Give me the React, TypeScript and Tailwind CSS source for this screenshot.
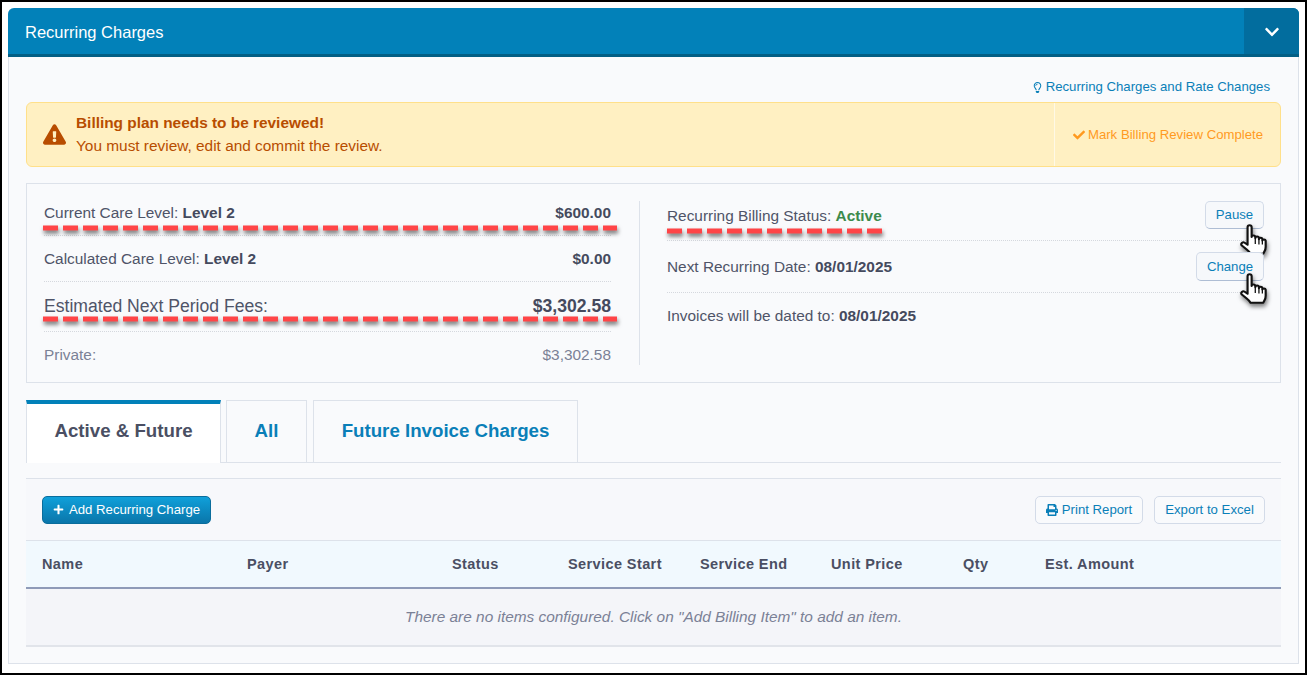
import { FaCheck, FaChevronDown, FaExclamationTriangle, FaPlus, FaPrint, FaRegLightbulb } from "react-icons/fa";

const columns = [
  { name: "Name", width: "w-[205px]" },
  { name: "Payer", width: "w-[205px]" },
  { name: "Status", width: "w-[116px]" },
  { name: "Service Start", width: "w-[132px]" },
  { name: "Service End", width: "w-[131px]" },
  { name: "Unit Price", width: "w-[132px]" },
  { name: "Qty", width: "w-[82px]" },
  { name: "Est. Amount", width: "w-[120px]" },
];

// red dashed marker drawn over a row
function Dashes({ width, className }: { width: number; className: string }) {
  return (
    <svg
      width={width}
      height="14"
      className={`absolute drop-shadow-[1px_3px_2px_rgba(0,0,0,0.55)] ${className}`}
    >
      <line x1="0" y1="4" x2={width} y2="4" stroke="#ff4447" strokeWidth="5" strokeDasharray="15 5" />
    </svg>
  );
}

function HandCursor({ className }: { className: string }) {
  return (
    <svg
      width="30"
      height="34"
      viewBox="0 0 28 34"
      preserveAspectRatio="none"
      className={`absolute drop-shadow-[1px_3px_2px_rgba(0,0,0,0.5)] ${className}`}
    >
      <path
        d="M8 3.2a1.900 1.900 0 0 1 3.800 0V13a1.700 1.700 0 0 1 3.400.2v1a1.700 1.700 0 0 1 3.400 0v1a1.600 1.600 0 0 1 3.200.1v1.200a1.600 1.600 0 0 1 3.100.2v6c0 2-.4 3.400-1.200 4.800l-1 2.200H10.800c-.8-1.600-2-2.800-3.600-4.200L2.600 21.600a2 2 0 0 1 2.700-2.900L8 20.800z"
        fill="#fff"
        stroke="#111"
        strokeWidth="2"
        strokeLinejoin="round"
      />
      <path d="M15.200 15v5M18.600 15.500v5M21.800 16.500v4" stroke="#111" strokeWidth="1.200" fill="none" />
    </svg>
  );
}

export default function App() {
  return (
    <div className="h-[675px] w-[1307px] overflow-hidden bg-white border-2 border-black pt-[6px] pl-[6px] font-['Liberation_Sans',Arial,sans-serif] text-[15.4px] text-[#4f5468]">
      <div className="h-[656px] w-[1291px] rounded-t-md border-x border-b border-[#dde2ea] bg-[#f9fafc]">
        {/* header */}
        <div className="-mx-px flex h-[49px] items-stretch justify-between rounded-t-md border-b-[3px] border-[#035f85] bg-[#0281b9]">
          <div className="flex items-center pl-[17px] pt-[3px] text-[16.5px] text-white">Recurring Charges</div>
          <div className="flex w-[55px] items-center justify-center rounded-tr-md bg-[#026d9e] pt-[2px] text-white">
            <FaChevronDown size={16} />
          </div>
        </div>

        <div className="px-[17px]">
          <div className="flex h-[45px] items-center justify-end gap-[3px] pt-[15px] pr-[11px] text-[13.2px] text-[#0a7fb8]">
            <FaRegLightbulb size={11} />
            <a>Recurring Charges and Rate Changes</a>
          </div>

          {/* alert */}
          <div className="flex h-[65px] items-stretch rounded-md border border-[#ffe08a] bg-[#fff0c2]">
            <div className="flex flex-1 items-center">
              <FaExclamationTriangle size={23} className="ml-[16px] mr-[10px] text-[#b84d00]" />
              <div className="pt-[1px] text-[#b84d00]">
                <div className="font-bold leading-[22px]">Billing plan needs to be reviewed!</div>
                <div className="leading-[24px]">You must review, edit and commit the review.</div>
              </div>
            </div>
            <div className="flex w-[226px] items-center justify-center gap-[3px] border-l border-[#fff9e6] pl-[1px] text-[13.2px] text-[#ff9a1f]">
              <FaCheck size={12} />
              <span>Mark Billing Review Complete</span>
            </div>
          </div>

          {/* care level and billing status */}
          <div className="mt-[16px] flex h-[200px] border border-[#dde2ea] py-[17px]">
            <div className="w-[612px] pl-[17px] pr-[28px]">
              <div className="relative flex h-[35px] justify-between border-b border-dotted border-[#d5d8de] pt-[2px] leading-[20px]">
                <span>
                  Current Care Level: <b className="text-[#454a5e]">Level 2</b>
                </span>
                <b className="text-[#454a5e]">$600.00</b>
                <Dashes width={574} className="-left-[1px] top-[23px]" />
              </div>
              <div className="flex h-[46px] items-center justify-between border-b border-dotted border-[#d5d8de] pt-[1px]">
                <span>
                  Calculated Care Level: <b className="text-[#454a5e]">Level 2</b>
                </span>
                <b className="text-[#454a5e]">$0.00</b>
              </div>
              <div className="relative flex h-[50px] items-center justify-between border-b border-dotted border-[#d5d8de] text-[17.6px]">
                <span>Estimated Next Period Fees:</span>
                <b className="text-[#454a5e]">$3,302.58</b>
                <Dashes width={574} className="-left-[1px] top-[33px]" />
              </div>
              <div className="flex justify-between pt-[13px] leading-[20px] text-[#7b8196]">
                <span>Private:</span>
                <span>$3,302.58</span>
              </div>
            </div>

            <div className="w-[641px] border-l border-[#dde2ea] pl-[27px] pr-[16px]">
              <div className="relative flex h-[40px] items-start justify-between border-b border-dotted border-[#d5d8de]">
                <span className="pt-[5px] leading-[20px]">
                  Recurring Billing Status: <b className="text-[#3c8a4c]">Active</b>
                </span>
                <button className="h-[28px] w-[59px] rounded-[5px] border border-[#d3dbe8] border-b-[#aebdd4] bg-[#f6f8fb] text-[13.2px] text-[#0a7fb8]">
                  Pause
                </button>
                <Dashes width={215} className="left-0 top-[26px]" />
                <HandCursor className="-right-[5px] top-[23px]" />
              </div>
              <div className="relative flex h-[52px] items-center justify-between border-b border-dotted border-[#d5d8de]">
                <span className="pt-[1px]">
                  Next Recurring Date: <b className="text-[#454a5e]">08/01/2025</b>
                </span>
                <button className="h-[29px] w-[68px] rounded-[5px] border border-[#d3dbe8] border-b-[#aebdd4] bg-[#f6f8fb] text-[13.2px] text-[#0a7fb8]">
                  Change
                </button>
                <HandCursor className="-right-[5px] top-[32px]" />
              </div>
              <div className="pt-[13px] leading-[20px]">
                Invoices will be dated to: <b className="text-[#454a5e]">08/01/2025</b>
              </div>
            </div>
          </div>

          {/* tabs */}
          <div className="mt-[17px] flex h-[63px] items-stretch gap-[5px] border-b border-[#dde2ea] text-[18.7px] font-bold">
            <div className="-mb-px flex w-[195px] items-center justify-center border-x border-t-4 border-[#dde2ea] border-t-[#0281b9] bg-white pb-[5px] text-[#4a4f63]">
              Active &amp; Future
            </div>
            <div className="flex w-[81px] items-center justify-center border-x border-t border-[#dde2ea] pb-[1px] text-[#0a7fb8]">
              All
            </div>
            <div className="ml-px flex w-[265px] items-center justify-center border-x border-t border-[#dde2ea] pb-[1px] text-[#0a7fb8]">
              Future Invoice Charges
            </div>
          </div>

          {/* charges table */}
          <div className="mt-[15px] border-t border-[#dde2ea]">
            <div className="flex h-[61px] items-center justify-between bg-[#f7f8fb] px-[16px]">
              <button className="flex h-[28px] w-[169px] items-center justify-center gap-[5px] rounded-[5px] border border-[#0a6d9c] bg-gradient-to-b from-[#10a0da] to-[#0a76aa] text-[13.2px] text-white">
                <FaPlus size={11} />
                Add Recurring Charge
              </button>
              <div className="flex gap-[11px]">
                <button className="flex h-[28px] w-[108px] items-center justify-center gap-[4px] rounded-[5px] border border-[#d3dbe8] bg-[#f9fafc] text-[13.2px] text-[#0a7fb8]">
                  <FaPrint size={12} />
                  Print Report
                </button>
                <button className="h-[28px] w-[111px] rounded-[5px] border border-[#d3dbe8] bg-[#f9fafc] text-[13.2px] text-[#0a7fb8]">
                  Export to Excel
                </button>
              </div>
            </div>
            <div className="flex h-[49px] items-center border-t border-b-2 border-[#dde2ea] border-b-[#8f9bb8] bg-[#f1f9fe] pl-[16px] pt-[1px] text-[14.5px] font-bold tracking-[0.4px] text-[#4a4f63]">
              {columns.map((col) => (
                <div key={col.name} className={col.width}>
                  {col.name}
                </div>
              ))}
            </div>
            <div className="flex h-[58px] items-center justify-center border-b-2 border-[#e1e4ea] bg-[#f4f5f9] italic text-[#7b8196]">
              There are no items configured. Click on "Add Billing Item" to add an item.
            </div>
          </div>
        </div>
      </div>
    </div>
  );
}
